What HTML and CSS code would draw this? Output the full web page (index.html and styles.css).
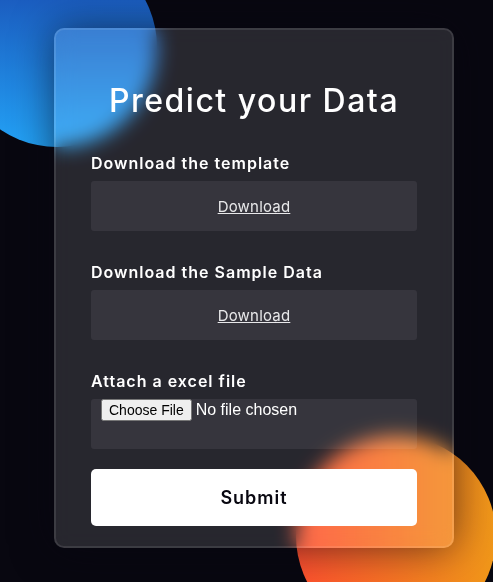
FILE: index.html
```
<!DOCTYPE html>
<html lang="en">
<head>
    <meta charset="UTF-8">
    <meta name="viewport" content="width=device-width, initial-scale=1.0">
    <title>Predict your Data</title>
    <link rel="stylesheet" href="styles.css">
</head>
<body>
    <div class="background">
        <div class="shape shape-blue"></div>
        <div class="shape shape-orange"></div>

        <form class="card" onsubmit="return false;">
            <h3>Predict your Data</h3>

            <label>Download the template</label>
            <div class="field">
                <a href="#">Download</a>
            </div>

            <label class="spaced">Download the Sample Data</label>
            <div class="field">
                <a href="#">Download</a>
            </div>

            <label class="spaced">Attach a excel file</label>
            <input type="file" class="file-input">

            <button type="submit" class="btn-submit">Submit</button>
        </form>
    </div>
</body>
</html>
```

FILE: styles.css
```
* {
    box-sizing: border-box;
}

body {
    margin: 0;
    padding: 0;
    background-color: #080710;
    font-family: 'Inter', 'Open Sans', sans-serif;
}

.background {
    position: relative;
    width: 493px;
    height: 582px;
    overflow: hidden;
    padding: 28px 0 0 54px;
}

.shape {
    position: absolute;
    width: 200px;
    height: 200px;
    border-radius: 50%;
}

.shape-blue {
    background: linear-gradient(#1845ad, #23a2f6);
    left: -43px;
    top: -53px;
}

.shape-orange {
    background: linear-gradient(to right, #ff512f, #f09819);
    left: 296px;
    top: 436px;
}

.card {
    position: relative;
    width: 400px;
    height: 520px;
    background-color: rgba(255, 255, 255, 0.13);
    border-radius: 10px;
    backdrop-filter: blur(10px);
    border: 2px solid rgba(255, 255, 255, 0.1);
    box-shadow: 0 0 40px rgba(8, 7, 16, 0.6);
    padding: 50px 35px 20px;
    color: #ffffff;
}

h3 {
    margin: 0;
    font-size: 32px;
    font-weight: 500;
    line-height: 42px;
    text-align: center;
    letter-spacing: 1.5px;
}

label {
    display: block;
    margin-top: 29px;
    font-size: 16px;
    font-weight: 600;
    line-height: 24px;
    letter-spacing: 1px;
}

.field {
    height: 50px;
    margin-top: 6px;
    background-color: rgba(255, 255, 255, 0.07);
    border-radius: 3px;
    display: flex;
    align-items: center;
    justify-content: center;
}

.field a {
    color: #e8e8ea;
    font-size: 15px;
    letter-spacing: 0.2px;
    text-decoration: underline;
}

.file-input {
    display: block;
    width: 100%;
    height: 50px;
    margin-top: 6px;
    padding: 0 10px;
    background-color: rgba(255, 255, 255, 0.07);
    border: none;
    border-radius: 3px;
    color: #ffffff;
    font-family: 'Liberation Sans', Arial, sans-serif;
    font-size: 16px;
}

.file-input::file-selector-button {
    font-family: 'Liberation Sans', Arial, sans-serif;
    font-size: 14px;
}

.btn-submit {
    display: block;
    width: 100%;
    margin-top: 20px;
    padding: 15px 0;
    background-color: #ffffff;
    color: #080710;
    border: none;
    border-radius: 5px;
    font-family: inherit;
    font-size: 18px;
    font-weight: 600;
    line-height: 27px;
    letter-spacing: 1px;
    cursor: pointer;
}
```
